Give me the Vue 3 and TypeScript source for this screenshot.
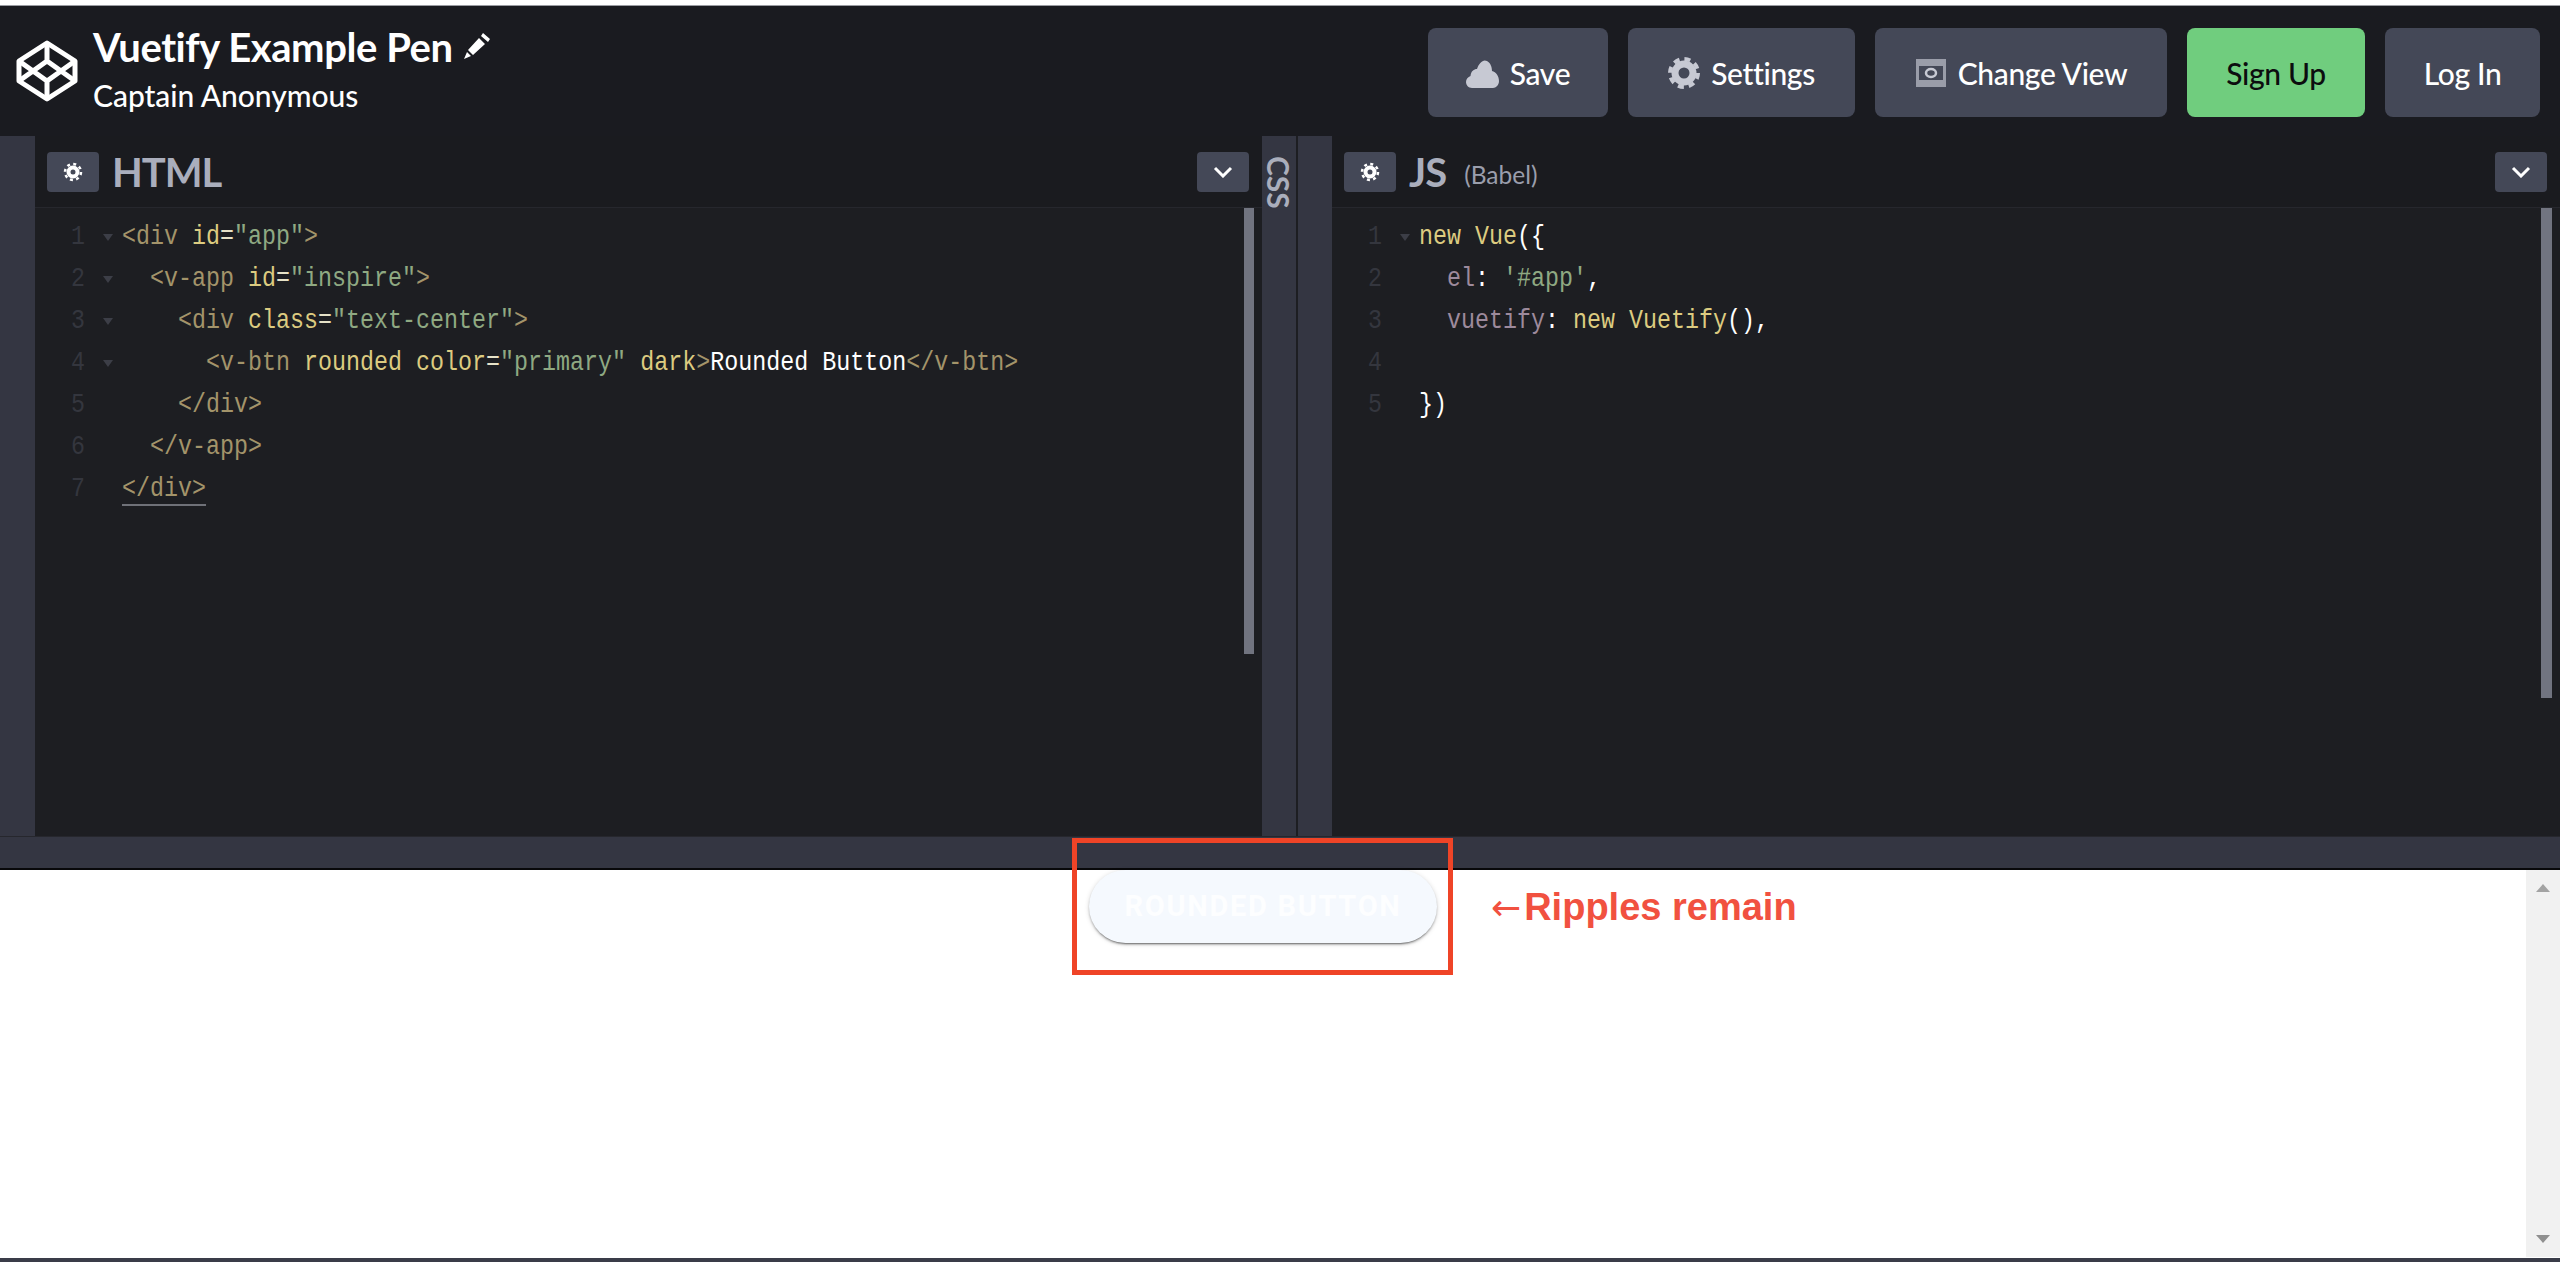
<script setup lang="ts">
type Tok = [string, string]
interface Line { indent: number; fold: boolean; toks: Tok[] }

const htmlLines: Line[] = [
  { indent: 0, fold: true, toks: [['t', '<div'], ['w', ' '], ['a', 'id'], ['p', '='], ['s', '"app"'], ['t', '>']] },
  { indent: 2, fold: true, toks: [['t', '<v-app'], ['w', ' '], ['a', 'id'], ['p', '='], ['s', '"inspire"'], ['t', '>']] },
  { indent: 4, fold: true, toks: [['t', '<div'], ['w', ' '], ['a', 'class'], ['p', '='], ['s', '"text-center"'], ['t', '>']] },
  { indent: 6, fold: true, toks: [['t', '<v-btn'], ['w', ' '], ['a', 'rounded'], ['w', ' '], ['a', 'color'], ['p', '='], ['s', '"primary"'], ['w', ' '], ['a', 'dark'], ['t', '>'], ['w', 'Rounded Button'], ['t', '</v-btn>']] },
  { indent: 4, fold: false, toks: [['t', '</div>']] },
  { indent: 2, fold: false, toks: [['t', '</v-app>']] },
  { indent: 0, fold: false, toks: [['u', '</div>']] }
]
const jsLines: Line[] = [
  { indent: 0, fold: true, toks: [['a', 'new'], ['w', ' '], ['a', 'Vue'], ['w', '({']] },
  { indent: 2, fold: false, toks: [['k', 'el'], ['w', ': '], ['s', "'#app'"], ['w', ',']] },
  { indent: 2, fold: false, toks: [['k', 'vuetify'], ['w', ': '], ['a', 'new'], ['w', ' '], ['a', 'Vuetify'], ['w', '(),']] },
  { indent: 0, fold: false, toks: [] },
  { indent: 0, fold: false, toks: [['w', '})']] }
]
const panes = [
  { id: 'html', lines: htmlLines },
  { id: 'js', lines: jsLines }
]
</script>

<template>
  <div class="page">
    <div class="topline"></div>
    <header class="bar">
      <div class="brand">
        <svg class="logo" viewBox="0 0 62 62" fill="none" stroke="#fff" stroke-width="5" stroke-linejoin="round">
          <path d="M31 3 59 21V41L31 59 3 41V21Z" />
          <path d="M31 3V21M31 41V59M3 21 31 41 59 21M3 41 31 21 59 41" />
        </svg>
        <div class="titles">
          <div class="title">Vuetify Example Pen
            <svg class="pencil" viewBox="0 0 28 28" fill="#fff">
              <path d="M20 1 27 7 25 10 18 4ZM16 6 22 12 10 23 5 18ZM4 20 8 24 1 27Z" />
            </svg>
          </div>
          <div class="owner">Captain Anonymous</div>
        </div>
      </div>
      <nav class="actions">
        <button class="btn save">
          <svg class="ico" viewBox="0 0 33 30" fill="#c7c9d3"><path d="M6 30C2.500 30 0 27 0 24 0 21 2 19 4.500 18 5 13 8 11 11 11 13 5 17 1 21 3 25 5 26 10 26 13 30 14 33 18 33 23 33 27 30 30 27 30Z" /></svg>
          Save
        </button>
        <button class="btn settings">
          <svg class="ico tall" viewBox="0 0 32 32" fill="none" stroke="#c7c9d3">
            <circle cx="16" cy="16" r="9" stroke-width="7" />
            <circle cx="16" cy="16" r="14" stroke-width="4" stroke-dasharray="6 4.997" />
          </svg>
          Settings
        </button>
        <button class="btn view">
          <svg class="ico tall" viewBox="0 0 32 28">
            <path d="M1 0H31V28H1Z" fill="#9a9da9" />
            <path d="M4 7H28V21H4Z" fill="#444857" />
            <ellipse cx="16" cy="14" rx="5" ry="4" fill="none" stroke="#c7c9d3" stroke-width="2.500" />
          </svg>
          Change View
        </button>
        <button class="btn signup">Sign Up</button>
        <button class="btn login">Log In</button>
      </nav>
    </header>

    <main class="editors">
      <div class="strip"></div>
      <section v-for="pane in panes" :key="pane.id" class="pane" :class="pane.id">
        <div class="tab">
          <button class="mini gear">
            <svg viewBox="0 0 20 20" width="20" height="20" fill="none" stroke="#fff">
              <circle cx="10" cy="10" r="4.500" stroke-width="4" />
              <circle cx="10" cy="10" r="8" stroke-width="2.500" stroke-dasharray="3 3.283" />
            </svg>
          </button>
          <h2 class="lang">{{ pane.id === 'html' ? 'HTML' : 'JS' }}</h2>
          <span v-if="pane.id === 'js'" class="pre">(Babel)</span>
          <button class="mini chev">
            <svg viewBox="0 0 20 12" width="20" height="12" fill="none" stroke="#fff" stroke-width="3"><path d="M2 2 10 10 18 2" /></svg>
          </button>
        </div>
        <div class="code-area">
          <div class="gutter">
            <div v-for="(l, i) in pane.lines" :key="i" class="gl">
              <span class="num">{{ i + 1 }}</span>
              <span class="fold" :class="{ on: l.fold }"></span>
            </div>
          </div>
          <div class="code">
            <div v-for="(l, i) in pane.lines" :key="i" class="cl">{{ ' '.repeat(l.indent) }}<span v-for="(t, j) in l.toks" :key="j" :class="t[0]">{{ t[1] }}</span></div>
          </div>
          <div class="thumb"></div>
        </div>
      </section>
      <div class="strip css-strip"><span class="css-label">CSS</span></div>
      <div class="strip js-strip"></div>
    </main>

    <div class="resizer"></div>

    <section class="preview">
      <div class="stage">
        <div class="ripple-btn">ROUNDED BUTTON</div>
      </div>
      <div class="scroll">
        <span class="arrow up"></span>
        <span class="arrow down"></span>
      </div>
    </section>
    <div class="foot"></div>

    <div class="callout"></div>
    <div class="note"><span class="note-arrow">←</span>Ripples remain</div>
  </div>
</template>

<style>
html, body { margin: 0; background: #fff; overflow: hidden; }
</style>

<style scoped>
.page {
  position: relative;
  width: 2560px;
  height: 1262px;
  display: flex;
  flex-direction: column;
  overflow: hidden;
  font-family: Lato, "Liberation Sans", sans-serif;
}
.topline { height: 6px; flex: none; background: #fff; border-bottom: 1px solid #9a9ca2; box-sizing: border-box; }
.bar {
  height: 130px;
  flex: none;
  background: #1a1b20;
  display: flex;
  justify-content: space-between;
  align-items: flex-start;
  padding: 22px 20px 0 16px;
  box-sizing: border-box;
}
.brand { display: flex; align-items: flex-start; }
.logo { width: 62px; height: 62px; margin-top: 12px; }
.titles { margin: -4px 0 0 15px; color: #fff; }
.title { font-size: 40px; font-weight: 700; line-height: 46px; letter-spacing: -0.43px; white-space: nowrap; display: flex; align-items: center; gap: 10px; }
.pencil { width: 28px; height: 28px; margin-top: -2px; }
.owner { font-size: 30px; line-height: 34px; margin-top: 8px; font-weight: 500; letter-spacing: -0.05px; }
.actions { display: flex; gap: 20px; }
.btn {
  height: 89px;
  border: 0;
  border-radius: 8px;
  background: #444857;
  color: #fff;
  font: 500 30px Lato, "Liberation Sans", sans-serif;
  letter-spacing: -0.35px;
  display: flex;
  align-items: center;
  justify-content: center;
  gap: 11px;
  padding: 0;
}
.save { width: 180px; }
.settings { width: 227px; }
.view { width: 292px; }
.signup { width: 178px; background: #70cd7e; color: #0c0d0f; }
.login { width: 155px; }
.ico { width: 33px; height: 30px; }
.ico.tall { width: 32px; height: 28px; }
.settings .ico.tall { height: 32px; }

.editors {
  height: 700px;
  flex: none;
  display: grid;
  grid-template-columns: 35px 1227px 34px 36px 1fr;
  background: #1d1e22;
}
.strip { background: #343642; }
.pane { min-width: 0; display: flex; flex-direction: column; }
.html { grid-column: 2; grid-row: 1; }
.js { grid-column: 5; grid-row: 1; }
.css-strip { grid-column: 3; grid-row: 1; }
.js-strip { grid-column: 4; grid-row: 1; border-left: 2px solid #1d1e22; }
.tab {
  height: 72px;
  flex: none;
  box-sizing: border-box;
  border-bottom: 1px solid #26272d;
  background: #1a1b1f;
  display: flex;
  align-items: center;
  padding: 0 13px 0 12px;
}
.mini {
  width: 52px;
  height: 40px;
  border: 0;
  padding: 0;
  border-radius: 4px;
  background: #444857;
  display: flex;
  align-items: center;
  justify-content: center;
}
.lang { margin: 0 0 0 13px; color: #aaaebc; font-size: 40px; font-weight: 700; letter-spacing: -1px; line-height: 40px; }
.pre { margin: 6px 0 0 18px; color: #9a9eac; font-size: 24.5px; }
.chev { margin-left: auto; }
.code-area { position: relative; flex: 1; display: flex; padding-top: 8px; background: #1d1e22; }
.gutter { width: 87px; flex: none; }
.gl { height: 42px; position: relative; font: 28px/42px "Liberation Mono", monospace; color: #34363e; }
.num { position: absolute; left: 36px; transform: scaleX(0.83); transform-origin: 0 0; }
.fold { position: absolute; left: 68px; top: 18px; width: 0; height: 0; border: 5px solid transparent; border-top: 7px solid transparent; border-bottom: 0; }
.fold.on { border-top-color: #3c3e47; }
.code {
  flex: 1;
  font: 28px/42px "Liberation Mono", monospace;
  white-space: pre;
  transform: scaleX(0.8333);
  transform-origin: 0 0;
  color: #fff;
}
.cl { height: 42px; }
.t { color: #a3946a; }
.a { color: #dccb80; }
.p { color: #e6e2c8; }
.s { color: #8fa982; }
.k { color: #9d8a9c; }
.w { color: #fff; }
.u { color: #a3946a; text-decoration: underline 2px #6f7178; text-underline-offset: 8px; text-decoration-skip-ink: none; }
.thumb { position: absolute; top: 0; background: #717480; }
.html .thumb { left: 1209px; width: 10px; height: 446px; }
.js .thumb { left: 1209px; width: 11px; height: 490px; }

.resizer { height: 34px; flex: none; box-sizing: border-box; background: #343642; border-bottom: 2px solid #08080a; border-top: 1px solid #26272d; }
.preview { flex: none; height: 387px; display: flex; background: #fff; }
.stage { flex: 1; display: flex; justify-content: center; align-items: flex-start; }
.ripple-btn {
  width: 348px;
  height: 73px;
  border-radius: 37px;
  background: #f5f9fe;
  box-shadow: 0 3px 1px -2px rgba(0, 0, 0, .3), 0 2px 2px 0 rgba(0, 0, 0, .2), 0 1px 5px 0 rgba(0, 0, 0, .16);
  color: #fdfeff;
  font: 700 29px/73px Roboto, "Liberation Sans", sans-serif;
  letter-spacing: 1.7px;
  text-align: center;
}
.scroll {
  width: 34px;
  flex: none;
  background: #f1f1f1;
  position: relative;
}
.arrow { position: absolute; left: 10px; width: 0; height: 0; border-left: 7px solid transparent; border-right: 7px solid transparent; }
.up { top: 14px; border-bottom: 8px solid #a3a3a3; }
.down { bottom: 14px; border-top: 8px solid #8f8f8f; }
.foot { flex: 1; background: #fff; border-top: 1px solid #fff; box-sizing: border-box; position: relative; }
.foot::after { content: ""; display: block; height: 4px; background: #3a3c48; }

.css-label {
  display: block;
  writing-mode: vertical-rl;
  color: #aaaebc;
  font-size: 30px;
  font-weight: 700;
  line-height: 34px;
  padding-top: 20px;
}
.callout {
  position: absolute;
  left: 1072px;
  top: 838px;
  width: 381px;
  height: 137px;
  box-sizing: border-box;
  border: 5px solid #ef4427;
}
.note {
  position: absolute;
  left: 1491px;
  top: 884px;
  color: #f15140;
  font: 700 38px/46px "Liberation Sans", sans-serif;
  white-space: nowrap;
}
.note-arrow { font: 400 36px/46px "DejaVu Sans", sans-serif; margin-right: 3px; }
</style>
